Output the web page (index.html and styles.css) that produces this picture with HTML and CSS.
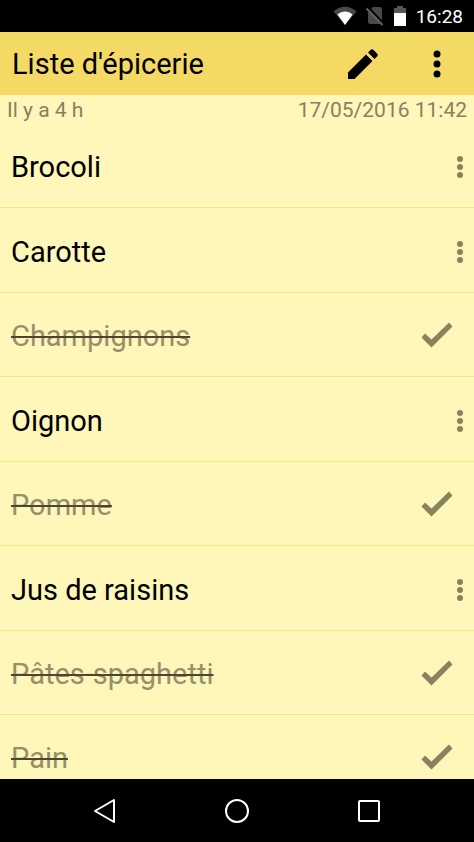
FILE: index.html
```html
<!DOCTYPE html>
<html lang="fr">
<head>
<meta charset="utf-8">
<meta name="viewport" content="width=device-width, initial-scale=1">
<title>Liste d'épicerie</title>
<link rel="stylesheet" href="styles.css">
</head>
<body>
<svg class="sprite" aria-hidden="true">
  <symbol id="more" viewBox="0 0 8 24"><circle cx="4" cy="4" r="3"/><circle cx="4" cy="12" r="3"/><circle cx="4" cy="20" r="3"/></symbol>
  <symbol id="check" viewBox="0 0 32 26"><path d="M4 11.500 10.500 17.500 28 0.500 31.500 4.500 10.500 25.500 0.500 15.500Z"/></symbol>
</svg>
<div class="screen">
  <div class="status">
    <svg width="24" height="20" viewBox="0 0 24 20" aria-hidden="true"><path d="M0.500 5.500C7-0.800 17-0.800 23.500 5.500L12 19Z" fill="#484848"/><path d="M4.500 8.500C9 4.500 15 4.500 19.500 8.500L12 19Z" fill="#fff"/></svg>
    <svg width="18" height="20" viewBox="0 0 18 20" aria-hidden="true"><path d="M7 1H14Q16 1 16 3V18H4Q2 18 2 16V6Z" fill="#484848"/><path d="M1 0 18 18" stroke="#000" stroke-width="2"/><path d="M0.500 2.500 16.500 19" stroke="#606060" stroke-width="2"/></svg>
    <svg width="14" height="20" viewBox="0 0 14 20" aria-hidden="true"><path d="M4 0H10V2H13V8H1V2H4Z" fill="#555"/><path d="M1 7H13V20H1Z" fill="#fff"/></svg>
    <time class="clock">16:28</time>
  </div>
  <header class="toolbar">
    <h1 class="title">Liste d'épicerie</h1>
    <button class="action" type="button" aria-label="Modifier"><svg width="30" height="30" viewBox="0 0 30 30"><path d="M0 23.500 18 5.500 24.500 12 6.500 30H0ZM20 3.500 22.500 1Q24-0.500 25.500 1L29 4.500Q30.500 6 29 7.500L26.500 10Z"/></svg></button>
    <button class="action" type="button" aria-label="Plus d'options"><svg width="8" height="28" viewBox="0 0 8 28"><circle cx="4" cy="4" r="3.500"/><circle cx="4" cy="14" r="3.500"/><circle cx="4" cy="24" r="3.500"/></svg></button>
  </header>
  <div class="meta"><span>Il y a 4 h</span><time>17/05/2016 11:42</time></div>
  <ul class="list">
    <li class="item"><span>Brocoli</span><button class="more" type="button" aria-label="Options de Brocoli"><svg><use href="#more"/></svg></button></li>
    <li class="item"><span>Carotte</span><button class="more" type="button" aria-label="Options de Carotte"><svg><use href="#more"/></svg></button></li>
    <li class="item done"><s><span>Champignons</span></s><button class="check" type="button" aria-label="Décocher Champignons"><svg><use href="#check"/></svg></button></li>
    <li class="item"><span>Oignon</span><button class="more" type="button" aria-label="Options de Oignon"><svg><use href="#more"/></svg></button></li>
    <li class="item done"><s><span>Pomme</span></s><button class="check" type="button" aria-label="Décocher Pomme"><svg><use href="#check"/></svg></button></li>
    <li class="item"><span>Jus de raisins</span><button class="more" type="button" aria-label="Options de Jus de raisins"><svg><use href="#more"/></svg></button></li>
    <li class="item done"><s><span>Pâtes-spaghetti</span></s><button class="check" type="button" aria-label="Décocher Pâtes-spaghetti"><svg><use href="#check"/></svg></button></li>
    <li class="item done"><s><span>Pain</span></s><button class="check" type="button" aria-label="Décocher Pain"><svg><use href="#check"/></svg></button></li>
  </ul>
  <nav class="navbar">
    <button type="button" aria-label="Retour"><svg width="26" height="26" viewBox="0 0 26 26"><path d="M23 2V24L4 13Z"/></svg></button>
    <button type="button" aria-label="Accueil"><svg width="26" height="26" viewBox="0 0 26 26"><circle cx="13" cy="13" r="11"/></svg></button>
    <button type="button" aria-label="Applications récentes"><svg width="26" height="26" viewBox="0 0 26 26"><rect x="2" y="3" width="20" height="20" rx="1"/></svg></button>
  </nav>
</div>
</body>
</html>
```
FILE: styles.css
```css
* {
  box-sizing: border-box;
}

body {
  margin: 0;
  background: #000;
  color: #000;
  font-family: Roboto, "Liberation Sans", sans-serif;
}

button {
  display: flex;
  align-items: center;
  justify-content: center;
  padding: 0;
  border: 0;
  background: none;
}

svg {
  display: block;
}

.sprite {
  position: absolute;
  width: 0;
  height: 0;
}

.screen {
  display: flex;
  flex-direction: column;
  height: 100vh;
  overflow: hidden;
  background: #fff6ba;
}

.status {
  display: flex;
  flex: none;
  align-items: center;
  justify-content: flex-end;
  gap: 9px;
  height: 32px;
  padding-right: 11px;
  background: #000;
  color: #fff;
}

.clock {
  font-size: 19px;
  font-weight: 400;
}

.toolbar {
  display: flex;
  flex: none;
  align-items: center;
  height: 63px;
  padding-left: 12px;
  background: #f4d964;
}

.title {
  flex: 1;
  margin: 0;
  font-size: 29px;
  font-weight: 400;
}

.action {
  width: 74px;
  height: 63px;
}

.meta {
  display: flex;
  flex: none;
  justify-content: space-between;
  height: 28px;
  padding: 2px 7px;
  color: #86815f;
  font-size: 21px;
  line-height: 26px;
}

.list {
  flex: 1;
  min-height: 0;
  margin: 0;
  padding: 0;
  overflow: hidden;
  list-style: none;
}

.item {
  display: flex;
  align-items: center;
  justify-content: space-between;
  height: 85px;
  padding: 3px 10px 0 11px;
  border-bottom: 1px solid #f4e683;
  font-size: 29px;
}

.done {
  height: 84px;
}

.done s {
  text-decoration: line-through 2px #4a4632;
}

.done span {
  color: #96906a;
}

.more svg {
  width: 8px;
  height: 24px;
  fill: #88835f;
}

.check {
  padding: 0 11px 3px 0;
}

.check svg {
  width: 32px;
  height: 26px;
  fill: #88835f;
}

.navbar {
  display: flex;
  flex: none;
  justify-content: center;
  height: 63px;
  background: #000;
}

.navbar button {
  flex: 0 0 28%;
}

.navbar svg {
  fill: none;
  stroke: #fff;
  stroke-width: 2;
  stroke-linejoin: round;
}
```
